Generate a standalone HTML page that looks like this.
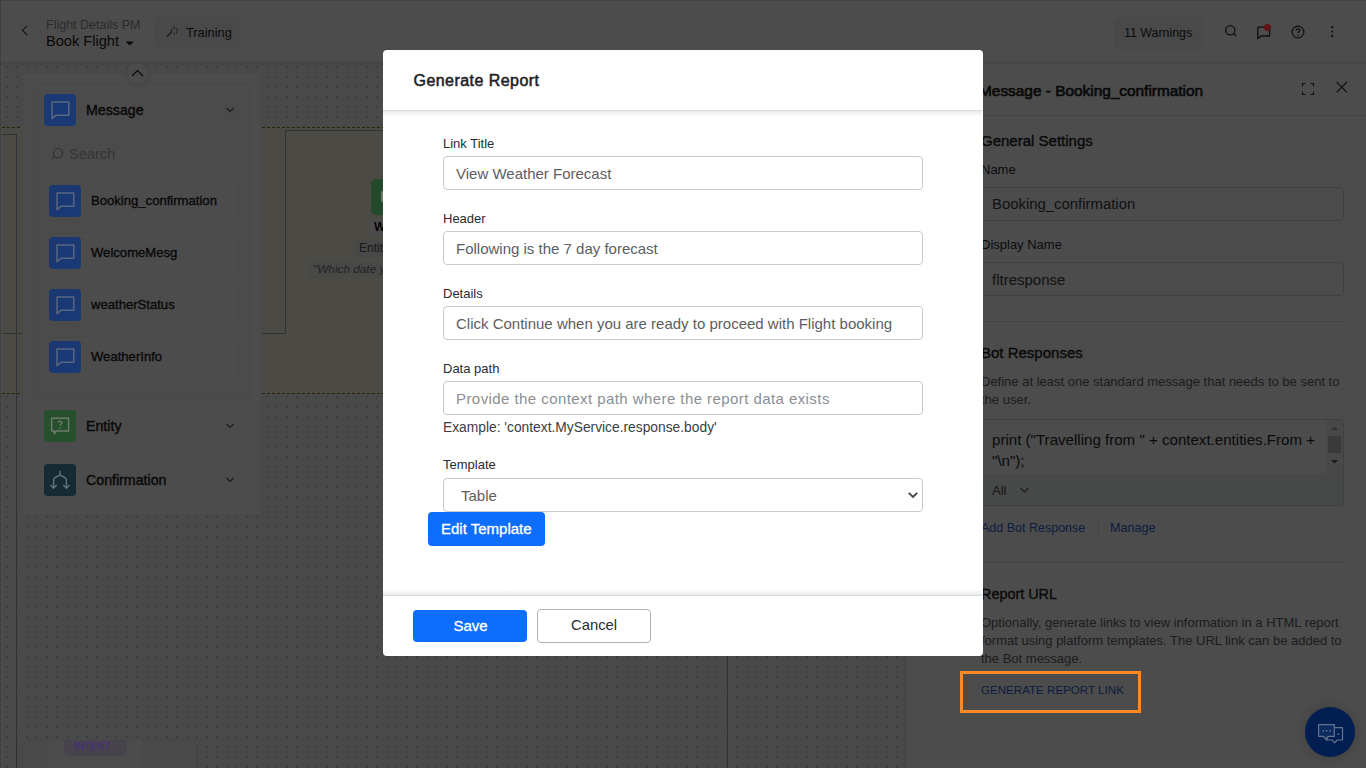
<!DOCTYPE html>
<html>
<head>
<meta charset="utf-8">
<style>
*{box-sizing:border-box;margin:0;padding:0}
html,body{width:1366px;height:768px;overflow:hidden;background:#fff;font-family:"Liberation Sans",sans-serif;color:#202124}
.a{position:absolute}
.t{position:absolute;white-space:nowrap;line-height:1}
#page{position:absolute;left:0;top:0;width:1366px;height:768px;overflow:hidden;background:#fff}
#hdr{position:absolute;left:0;top:0;width:1366px;height:63px;background:#fff;border-top:1px solid #dcdcdc;border-left:1px solid #d4d4d4;border-bottom:1px solid #e2e4e7;box-shadow:0 1px 3px rgba(0,0,0,0.08);z-index:1}
#canvas{position:absolute;left:2px;top:62px;width:903px;height:706px;background-color:#f5f6f8;
 background-image:radial-gradient(circle at 1px 1px,#cbcfd3 0.9px,transparent 1.3px);
 background-size:10px 10px;background-position:4px 3px;overflow:hidden;border-top:1px solid #dfe2e6}
#band{position:absolute;left:0;top:65px;width:903px;height:267px;background:#fbf8e4;
 border-top:1px dashed #8c7400;border-bottom:1px dashed #8c7400}
#rpanel{position:absolute;left:905px;top:62px;width:461px;height:706px;background:#fff;border-left:1px solid #d5d8dd;border-top:1px solid #d3d6da;overflow:hidden}
#overlay{z-index:10;position:absolute;left:0;top:0;width:1366px;height:768px;background:rgba(0,0,0,0.7)}
#modal{z-index:30;position:absolute;left:383px;top:50px;width:600px;height:606px;background:#fff;border-radius:4px;overflow:hidden}
.sb{-webkit-text-stroke:0.35px currentColor}
.hi{z-index:12}
.lbl{font-size:13px;color:#2a2c30}
.inp{position:absolute;width:480px;height:34px;border:1px solid #c9cacc;border-radius:4px;background:#fff}
.inp span{position:absolute;left:12px;top:9px;font-size:15px;line-height:1;white-space:nowrap;color:#5b5e63}
.inp span.ph{color:#8b8f94;letter-spacing:0.43px}
#orange{z-index:31;position:absolute;left:960px;top:671px;width:181px;height:42px;border:3px solid #ff8a25}
</style>
</head>
<body>
<div id="page">
  <!-- HEADER -->
  <div id="hdr">
    <svg class="a" style="left:17.5px;top:22px" width="10" height="14" viewBox="0 0 10 14"><path d="M8.2 2.8 L3.4 7.4 L8.2 12" fill="none" stroke="#3a3d42" stroke-width="1.1"/></svg>
    <div class="t" style="left:45px;top:18px;font-size:12.5px;color:#8d9096">Flight Details PM</div>
    <div class="t" style="left:45px;top:33px;font-size:14.6px;color:#1f2023">Book Flight</div>
    <svg class="a" style="left:124px;top:39.5px" width="10" height="6" viewBox="0 0 10 6"><path d="M0.5 0.5 L9 0.5 L4.75 4.6 Z" fill="#1f2023"/></svg>
    <div class="a" style="left:153px;top:15px;width:87px;height:33px;border-radius:6px;background:#f3f4f6"></div>
    <svg class="a" style="left:163px;top:23px" width="16" height="16" viewBox="0 0 16 16"><path d="M2.8 12.8 L8 7.7" stroke="#2f3237" stroke-width="1.1" fill="none"/><g stroke="#2f3237" stroke-width="0.9" fill="none"><path d="M10.4 2.6 V4.6 M10.4 8.6 V10.4 M6.4 6.6 H8.6 M12.2 6.6 H14.4 M7.8 4 L8.9 5.1 M13 4 L11.9 5.1 M13 9.2 L11.9 8.1"/></g></svg>
    <div class="t" style="left:185px;top:26px;font-size:12.8px;color:#26282c">Training</div>
    <div class="a" style="left:1113px;top:16px;width:89px;height:33px;border-radius:6px;background:#f3f4f6"></div>
    <div class="t" style="left:1123px;top:26px;font-size:12.4px;color:#2c2e33">11 Warnings</div>
    <svg class="a" style="left:1222px;top:22px" width="16" height="16" viewBox="0 0 16 16"><circle cx="7.3" cy="7.2" r="4.6" fill="none" stroke="#2f3237" stroke-width="1.3"/><path d="M10.6 10.5 L13.2 13.1" stroke="#2f3237" stroke-width="1.4"/></svg>
    <svg class="a" style="left:1254px;top:22px" width="18" height="18" viewBox="0 0 18 18"><path d="M2.8 4.2 H14.6 V13 H6.2 L2.8 15.6 Z" fill="none" stroke="#2f3237" stroke-width="1.3" stroke-linejoin="round"/></svg>
    <svg class="a" style="left:1289px;top:23px" width="16" height="16" viewBox="0 0 16 16"><circle cx="8" cy="8" r="5.9" fill="none" stroke="#2f3237" stroke-width="1.2"/><path d="M6.2 6.4 C6.2 4.4 9.8 4.4 9.8 6.4 C9.8 7.7 8 7.9 8 9.3" fill="none" stroke="#2f3237" stroke-width="1.2"/><circle cx="8" cy="11.2" r="0.75" fill="#2f3237"/></svg>
    <svg class="a" style="left:1328px;top:24px" width="6" height="14" viewBox="0 0 6 14"><circle cx="3.2" cy="2.2" r="1.15" fill="#2f3237"/><circle cx="3.2" cy="6.6" r="1.15" fill="#2f3237"/><circle cx="3.2" cy="11" r="1.15" fill="#2f3237"/></svg>
  </div>
  <!-- CANVAS -->
  <div id="canvas"></div>
  <div class="a" style="left:2px;top:127px;width:903px;height:267px;background:#fbf8e4;border-top:1px dashed #8c7400;border-bottom:1px dashed #8c7400"></div>
  <!-- left box lines -->
  <div class="a" style="left:2px;top:134px;width:15px;height:1px;background:#a2a7ae"></div>
  <div class="a" style="left:16px;top:134px;width:1px;height:634px;background:#a2a7ae"></div>
  <div class="a" style="left:2px;top:333px;width:284px;height:1px;background:#a2a7ae"></div>
  <!-- node box in band -->
  <div class="a" style="left:285px;top:130px;width:1px;height:204px;background:#a2a7ae"></div>
  <div class="a" style="left:285px;top:130px;width:200px;height:1px;background:#a2a7ae"></div>
  <div class="a" style="left:368px;top:219px;width:40px;height:17px;background:#fcfcfa"></div>
  <div class="t" style="left:374px;top:221px;font-size:12px;font-weight:700;color:#111">W</div>
  <div class="a" style="left:354px;top:240px;width:40px;height:17px;background:#f2f2ee;border-radius:2px"></div>
  <div class="t" style="left:359px;top:242px;font-size:12px;color:#555">Entit</div>
  <div class="a" style="left:308px;top:262px;width:90px;height:16px;background:#f2f2ee;border-radius:2px"></div>
  <div class="t" style="left:313px;top:264px;font-size:11.8px;font-style:italic;color:#6f7580">"Which date y</div>
  <!-- vertical line -->
  <div class="a" style="left:727px;top:394px;width:1px;height:374px;background:#a2a7ae"></div>
  <!-- intent node -->
  <div class="a" style="left:22px;top:740px;width:175px;height:40px;border-radius:8px;background:#f8f9fa;border:1px solid #e6e8eb"></div>
  <div class="a" style="left:49px;top:740px;width:93px;height:40px;background:#ffffff"></div>
  <div class="a" style="left:64px;top:740px;width:63px;height:16px;border-radius:0 0 5px 5px;background:#e9e3f7"></div>
  
  <!-- sidebar -->
  <div class="a" style="left:22px;top:72px;width:240px;height:444px;border-radius:4px;background:#fdfdfd;border:1px solid #eceef1"></div>
  <div class="a" style="left:33px;top:83px;width:218px;height:316px;border-radius:6px;background:#fbfbfc;border:1px solid #eceef1"></div>
  <div class="a" style="left:126px;top:62px;width:23px;height:23px;border-radius:50%;background:#fafafa;border:1px solid #e4e6e9;box-shadow:1px 1px 4px rgba(0,0,0,0.08);z-index:2"></div>
  <svg class="a" style="left:130px;top:68px;z-index:3" width="15" height="10" viewBox="0 0 15 10"><path d="M2 8 L7.5 2.6 L13 8" fill="none" stroke="#1b1d21" stroke-width="1.2"/></svg>
  <div class="t" style="left:86px;top:103px;font-size:14.2px;color:#1e2024;-webkit-text-stroke:0.4px #1e2024">Message</div>
  <div class="a" style="left:223px;top:102px;width:15px;height:16px;border-radius:2px;background:#f6f7f8"></div>
  <svg class="a" style="left:225px;top:106px" width="10" height="8" viewBox="0 0 10 8"><path d="M1.5 2 L5 5.5 L8.5 2" fill="none" stroke="#5a5d63" stroke-width="1.1"/></svg>
  <svg class="a" style="left:49px;top:146px" width="16" height="16" viewBox="0 0 16 16"><circle cx="9" cy="7" r="4.6" fill="none" stroke="#a5a8ad" stroke-width="1.2"/><path d="M5.6 10.4 L2.6 13.4" stroke="#a5a8ad" stroke-width="1.3"/></svg>
  <div class="t" style="left:69px;top:147px;font-size:14.6px;color:#aeb1b6">Search</div>
  <!-- items -->
  <div class="a" style="left:45px;top:181px;width:194px;height:40px;border-radius:4px;background:#fff;border:1px solid #f3f4f5"></div>
  <div class="t" style="left:91px;top:194px;font-size:13.1px;color:#1e2024;-webkit-text-stroke:0.35px #1e2024">Booking_confirmation</div>
  <div class="a" style="left:45px;top:233px;width:194px;height:40px;border-radius:4px;background:#fff;border:1px solid #f3f4f5"></div>
  <div class="t" style="left:91px;top:246px;font-size:13.1px;color:#1e2024;-webkit-text-stroke:0.35px #1e2024">WelcomeMesg</div>
  <div class="a" style="left:45px;top:285px;width:194px;height:40px;border-radius:4px;background:#fff;border:1px solid #f3f4f5"></div>
  <div class="t" style="left:91px;top:298px;font-size:13.1px;color:#1e2024;-webkit-text-stroke:0.35px #1e2024">weatherStatus</div>
  <div class="a" style="left:45px;top:337px;width:194px;height:40px;border-radius:4px;background:#fff;border:1px solid #f3f4f5"></div>
  <div class="t" style="left:91px;top:350px;font-size:13.1px;color:#1e2024;-webkit-text-stroke:0.35px #1e2024">WeatherInfo</div>
  <!-- entity / confirmation -->
  <div class="t" style="left:86px;top:419px;font-size:14.2px;color:#1e2024;-webkit-text-stroke:0.4px #1e2024">Entity</div>
  <svg class="a" style="left:225px;top:422px" width="10" height="8" viewBox="0 0 10 8"><path d="M1.5 2 L5 5.5 L8.5 2" fill="none" stroke="#5a5d63" stroke-width="1.1"/></svg>
  <div class="t" style="left:86px;top:473px;font-size:14.2px;color:#1e2024;-webkit-text-stroke:0.4px #1e2024">Confirmation</div>
  <svg class="a" style="left:225px;top:476px" width="10" height="8" viewBox="0 0 10 8"><path d="M1.5 2 L5 5.5 L8.5 2" fill="none" stroke="#5a5d63" stroke-width="1.1"/></svg>
  <!-- RIGHT PANEL -->
  <div id="rpanel"><div class="a" style="left:0;top:-1px;width:461px;height:706px">
    <div class="t" style="left:73px;top:20.5px;font-size:15.4px;color:#1d1f23;-webkit-text-stroke:0.65px #1d1f23">Message - Booking_confirmation</div>
    <svg class="a" style="left:395px;top:20px" width="14" height="14" viewBox="0 0 14 14"><path d="M1.5 4.5 V1.5 H4.5 M9.5 1.5 H12.5 V4.5 M12.5 9.5 V12.5 H9.5 M4.5 12.5 H1.5 V9.5" fill="none" stroke="#3b3e43" stroke-width="1.2"/></svg>
    <svg class="a" style="left:429px;top:18px" width="14" height="14" viewBox="0 0 14 14"><path d="M1.6 2 L12 12.4 M12 2 L1.6 12.4" fill="none" stroke="#3b3e43" stroke-width="1.2"/></svg>
    <div class="a" style="left:0;top:53px;width:462px;height:1px;background:#e2e4e8"></div>
    <div class="t sb" style="left:75px;top:71px;font-size:15px;color:#1d1f23">General Settings</div>
    <div class="t" style="left:75px;top:101px;font-size:13px;color:#2c2e33">Name</div>
    <div class="a" style="left:68px;top:125px;width:370px;height:34px;border:1px solid #d3d6da;border-radius:4px"></div>
    <div class="t" style="left:86px;top:135px;font-size:14.9px;color:#3b3d42">Booking_confirmation</div>
    <div class="t" style="left:75px;top:176px;font-size:13px;color:#2c2e33">Display Name</div>
    <div class="a" style="left:68px;top:200px;width:370px;height:34px;border:1px solid #d3d6da;border-radius:4px"></div>
    <div class="t" style="left:86px;top:210px;font-size:15px;color:#3b3d42">fltresponse</div>
    <div class="a" style="left:68px;top:259px;width:370px;height:1px;background:#e2e4e8"></div>
    <div class="t sb" style="left:75px;top:283px;font-size:15px;color:#1d1f23">Bot Responses</div>
    <div class="t" style="left:75px;top:311px;font-size:13px;line-height:18px;color:#5f6368;white-space:normal;width:370px">Define at least one standard message that needs to be sent to the user.</div>
    <div class="a" style="left:68px;top:357px;width:370px;height:87px;border:1px solid #d3d6da;border-radius:4px;overflow:hidden">
      <div class="t" style="left:17px;top:8.5px;font-size:15.1px;line-height:21px;color:#25272b;white-space:normal;width:334px">print ("Travelling from " + context.entities.From + "\n");</div>
      <div class="a" style="left:351px;top:0;width:17px;height:54px;background:#f1f1f1"></div>
      <svg class="a" style="left:354px;top:4px" width="11" height="8" viewBox="0 0 11 8"><path d="M2 6 L5.5 2.5 L9 6 Z" fill="#a3a3a3"/></svg>
      <div class="a" style="left:353px;top:16px;width:13px;height:17px;background:#c1c1c1"></div>
      <svg class="a" style="left:354px;top:38px" width="11" height="8" viewBox="0 0 11 8"><path d="M2 2 L5.5 5.5 L9 2 Z" fill="#505050"/></svg>
      <div class="a" style="left:0;top:54px;width:370px;height:32px;background:#eef0f2"></div>
      <div class="t" style="left:17px;top:63.5px;font-size:13px;color:#4a4d52">All</div>
      <svg class="a" style="left:44px;top:66px" width="11" height="8" viewBox="0 0 11 8"><path d="M1.5 2 L5.5 6 L9.5 2" fill="none" stroke="#5a5d63" stroke-width="1.1"/></svg>
    </div>
    <div class="t" style="left:75px;top:460px;font-size:12.5px;color:#2f62d3">Add Bot Response</div>
    <div class="a" style="left:192px;top:457px;width:1px;height:17px;background:#e2e4e8"></div>
    <div class="t" style="left:204px;top:460px;font-size:12.6px;color:#2f62d3">Manage</div>
    <div class="a" style="left:68px;top:500px;width:370px;height:1px;background:#e2e4e8"></div>
    <div class="t sb" style="left:75px;top:525px;font-size:14.4px;color:#1d1f23">Report URL</div>
    <div class="t" style="left:75px;top:552px;font-size:13px;line-height:18px;color:#5f6368;white-space:normal;width:370px">Optionally, generate links to view information in a HTML report format using platform templates. The URL link can be added to the Bot message.</div>
    <div class="t" style="left:75px;top:622.5px;font-size:11.5px;color:#2f62d3;letter-spacing:0.05px">GENERATE REPORT LINK</div>
  </div></div>
</div>
<div class="a" style="left:0;top:0;width:1px;height:768px;background:#d6d6d6;z-index:5"></div>
<div id="overlay"></div>
<div class="t hi" style="left:74px;top:741.5px;font-size:10.2px;color:#48307c;-webkit-text-stroke:0.25px #48307c">INTENT</div>
<div class="a hi" style="left:1264px;top:24px;width:7px;height:7px;border-radius:50%;background:#621318"></div>
<svg class="a hi" style="left:44px;top:94px" width="32" height="32" viewBox="0 0 32 32"><rect x="0" y="0" width="32" height="32" rx="4" fill="#193874"/><path d="M8 8 H24.8 V21.2 H12.2 L8 24.6 Z" fill="none" stroke="#5a6780" stroke-width="1.5" stroke-linejoin="round"/></svg>
<svg class="a hi" style="left:49px;top:185px" width="32" height="32" viewBox="0 0 32 32"><rect x="0" y="0" width="32" height="32" rx="4" fill="#193874"/><path d="M8 8 H24.8 V21.2 H12.2 L8 24.6 Z" fill="none" stroke="#5a6780" stroke-width="1.5" stroke-linejoin="round"/></svg>
<svg class="a hi" style="left:49px;top:237px" width="32" height="32" viewBox="0 0 32 32"><rect x="0" y="0" width="32" height="32" rx="4" fill="#193874"/><path d="M8 8 H24.8 V21.2 H12.2 L8 24.6 Z" fill="none" stroke="#5a6780" stroke-width="1.5" stroke-linejoin="round"/></svg>
<svg class="a hi" style="left:49px;top:289px" width="32" height="32" viewBox="0 0 32 32"><rect x="0" y="0" width="32" height="32" rx="4" fill="#193874"/><path d="M8 8 H24.8 V21.2 H12.2 L8 24.6 Z" fill="none" stroke="#5a6780" stroke-width="1.5" stroke-linejoin="round"/></svg>
<svg class="a hi" style="left:49px;top:341px" width="32" height="32" viewBox="0 0 32 32"><rect x="0" y="0" width="32" height="32" rx="4" fill="#193874"/><path d="M8 8 H24.8 V21.2 H12.2 L8 24.6 Z" fill="none" stroke="#5a6780" stroke-width="1.5" stroke-linejoin="round"/></svg>
<svg class="a hi" style="left:44px;top:410px" width="32" height="32" viewBox="0 0 32 32"><rect x="0" y="0" width="32" height="32" rx="4" fill="#26502c"/><path d="M7.6 8.2 H24.6 V21 H12.3 L10.4 23.8 V21 H7.6 Z" fill="none" stroke="#6f7a6c" stroke-width="1.4" stroke-linejoin="round"/><path d="M14.1 12.6 C14.1 10.6 17.9 10.6 17.9 12.6 C17.9 14 16 14.1 16 15.6" fill="none" stroke="#6f7a6c" stroke-width="1.3"/><circle cx="16" cy="17.8" r="0.85" fill="#6f7a6c"/></svg>
<svg class="a hi" style="left:44px;top:464px" width="32" height="32" viewBox="0 0 32 32"><rect x="0" y="0" width="32" height="32" rx="4" fill="#142b33"/><path d="M16 6.8 V10.6 C16 12.6 9.6 12 9.6 16.2 V24 M16 10.6 C16 12.6 22.4 12 22.4 16.2 V24 M6.5 21 L9.6 24.2 L12.7 21 M19.3 21 L22.4 24.2 L25.5 21" fill="none" stroke="#5f7479" stroke-width="1.4"/></svg>
<div class="a hi" style="left:371px;top:179px;width:36px;height:36px;border-radius:5px;background:#234a2a"></div>
<div class="a hi" style="left:381px;top:191px;width:3px;height:11px;border-radius:1px;background:#6b7a6b"></div>

<!-- MODAL -->
<div id="modal">
  <div class="t" style="left:30.5px;top:22.5px;font-size:16px;color:#1f2124;-webkit-text-stroke:0.55px #1f2124;letter-spacing:0.45px">Generate Report</div>
  <div class="a" style="left:0;top:60px;width:599px;height:1px;background:#d9dbdc"></div>
  <div class="a" style="left:0;top:61px;width:599px;height:6px;background:linear-gradient(#e9ebec,rgba(255,255,255,0))"></div>
  <!-- fields -->
  <div class="t lbl" style="left:60px;top:87px">Link Title</div>
  <div class="inp" style="left:60px;top:106px"><span>View Weather Forecast</span></div>
  <div class="t lbl" style="left:60px;top:162px">Header</div>
  <div class="inp" style="left:60px;top:181px"><span>Following is the 7 day forecast</span></div>
  <div class="t lbl" style="left:60px;top:237px">Details</div>
  <div class="inp" style="left:60px;top:256px"><span>Click Continue when you are ready to proceed with Flight booking</span></div>
  <div class="t lbl" style="left:60px;top:312px">Data path</div>
  <div class="inp" style="left:60px;top:331px"><span class="ph">Provide the context path where the report data exists</span></div>
  <div class="t" style="left:60px;top:371px;font-size:13.8px;color:#3a3d42">Example: 'context.MyService.response.body'</div>
  <div class="t lbl" style="left:60px;top:408px">Template</div>
  <div class="inp" style="left:60px;top:428px"><span style="left:17px">Table</span>
    <svg class="a" style="left:463px;top:11px" width="12" height="10" viewBox="0 0 12 10"><path d="M1.8 2.8 L6 7 L10.2 2.8" fill="none" stroke="#464646" stroke-width="1.9"/></svg>
  </div>
  <div class="a" style="left:45px;top:462px;width:117px;height:34px;border-radius:4px;background:#0d6efd"></div>
  <div class="t" style="left:58px;top:471px;font-size:15px;color:#fff;-webkit-text-stroke:0.3px #fff">Edit Template</div>
  <!-- footer -->
  <div class="a" style="left:0;top:539px;width:599px;height:6px;background:linear-gradient(rgba(255,255,255,0),#e9ebec)"></div>
  <div class="a" style="left:0;top:545px;width:599px;height:1px;background:#d9dbdc"></div>
  <div class="a" style="left:30px;top:560px;width:114px;height:32px;border-radius:4px;background:#0d6efd"></div>
  <div class="t" style="left:70.5px;top:568px;font-size:15px;color:#fff;-webkit-text-stroke:0.3px #fff">Save</div>
  <div class="a" style="left:154px;top:559px;width:114px;height:34px;border-radius:4px;background:#fff;border:1px solid #adb1b6"></div>
  <div class="t" style="left:188px;top:568px;font-size:14.8px;color:#2b2d31">Cancel</div>
</div>
<div id="orange"></div>
<div class="a" style="left:1305px;top:707px;width:50px;height:50px;border-radius:50%;background:#031f52;z-index:12;box-shadow:0 0 10px 2px rgba(0,0,0,0.12)"></div>
<svg class="a" style="left:1314px;top:718px;z-index:13" width="32" height="28" viewBox="0 0 32 28"><path d="M4.6 6.6 H20.3 V18.4 H14.5 L12 21.6 L9.5 18.4 H4.6 Z" fill="#0a2a60" stroke="#65738c" stroke-width="1.2" stroke-linejoin="round"/><path d="M20.3 9.6 H28.5 V22 H23.2 L20.6 24.8 L18.2 22 H13 V18.4" fill="none" stroke="#65738c" stroke-width="1.2" stroke-linejoin="round"/><circle cx="9.2" cy="12.8" r="0.85" fill="#65738c"/><circle cx="12.6" cy="12.8" r="0.85" fill="#65738c"/><circle cx="16" cy="12.8" r="0.85" fill="#65738c"/><circle cx="24.3" cy="16.2" r="0.85" fill="#65738c"/></svg>
</body>
</html>
